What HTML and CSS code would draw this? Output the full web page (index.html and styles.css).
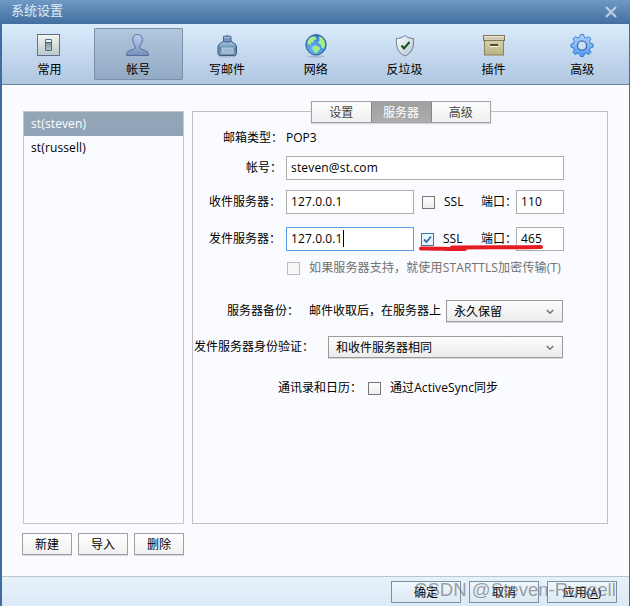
FILE: index.html
```html
<!DOCTYPE html>
<html lang="zh-CN">
<head>
<meta charset="utf-8">
<title>系统设置</title>
<link rel="stylesheet" href="styles.css">
</head>
<body>
<div class="window">
  <header class="titlebar">
    <span>系统设置</span>
    <svg class="close" width="12" height="12" viewBox="0 0 12 12"><path d="M1 1L11 11M11 1L1 11" stroke="#b8cde3" stroke-width="2.4"/></svg>
  </header>
  <nav class="toolbar">
    <a class="tool">
      <svg width="26" height="26" viewBox="0 0 26 26">
        <defs><linearGradient id="sw" x1="0" y1="0" x2="0" y2="1"><stop offset="0" stop-color="#f4f5f0"/><stop offset="1" stop-color="#b9c9c9"/></linearGradient><linearGradient id="knob" x1="0" y1="0" x2="0" y2="1"><stop offset="0" stop-color="#71818f"/><stop offset="1" stop-color="#b5c4cc"/></linearGradient></defs>
        <rect x="1.5" y="1.5" width="22" height="21" fill="url(#sw)" stroke="#5b7391"/>
        <rect x="9.5" y="6.5" width="6" height="11" rx=".5" fill="url(#knob)" stroke="#4b6b8b"/>
        <path d="M10 8h5" stroke="#e6ffff" stroke-width="2"/><path d="M10 9.500h5" stroke="#3f5a7b"/>
      </svg><span>常用</span></a>
    <a class="tool tool-active">
      <svg width="26" height="26" viewBox="0 0 26 26">
        <defs><linearGradient id="man" x1="0" y1="0" x2="0" y2="1"><stop offset="0" stop-color="#bfd1f3"/><stop offset="1" stop-color="#768db7"/></linearGradient></defs>
        <path d="M12.500 1.500C9.300 1.500 7.500 3.800 7.700 6.800C7.900 9.500 8.800 11.500 10 12.500V15C9 16.800 2 17.500 1.500 20.500V22.500H23.500V20.500C23 17.500 16 16.800 15 15V12.500C16.200 11.500 17.100 9.500 17.300 6.800C17.500 3.800 15.700 1.500 12.500 1.500Z" fill="url(#man)" stroke="#526d98"/>
      </svg><span>帐号</span></a>
    <a class="tool">
      <svg width="26" height="26" viewBox="0 0 26 26">
        <defs><linearGradient id="ink" x1="0" y1="0" x2="0" y2="1"><stop offset="0" stop-color="#a8d0e5"/><stop offset=".5" stop-color="#6387ac"/><stop offset="1" stop-color="#8396b2"/></linearGradient></defs>
        <ellipse cx="13" cy="23.500" rx="9" ry="1" fill="#8ea6bf" opacity=".6"/>
        <path d="M9.500 8.500C6 10 4 11.500 4 14V20.500Q4 22.500 6 22.500H20.500Q22.500 22.500 22.500 20.500V14C22.500 11.500 20.500 10 17 8.500Z" fill="url(#ink)" stroke="#3f5780"/>
        <rect x="8" y="15" width="11" height="5" fill="#9db8d3" stroke="#b4cee2"/>
        <path d="M9.500 3.500V8.500Q13 10 17 8.500V3.500Q13 2 9.500 3.500Z" fill="#7895bc" stroke="#485e8a"/><path d="M10 4.200Q13 5.200 16.500 4.200" stroke="#acc3df" fill="none"/>
      </svg><span>写邮件</span></a>
    <a class="tool">
      <svg width="26" height="26" viewBox="0 0 26 26">
        <defs><radialGradient id="sea" cx=".4" cy=".7" r=".7"><stop offset="0" stop-color="#6dbcfa"/><stop offset="1" stop-color="#3975c2"/></radialGradient></defs>
        <ellipse cx="13" cy="23.500" rx="9" ry="1.200" fill="#8ea6bf" opacity=".6"/>
        <circle cx="13" cy="11.800" r="10.200" fill="url(#sea)" stroke="#315d9d"/>
        <path d="M4.500 8.500L6.500 5L9.500 3.500L13 4L13.500 6.500L11 7L10.500 9.500L8.500 9L8 11.500L4.500 11.500ZM16 3.500L19 4.500L21.500 8L22.200 12L20.500 16L18.500 14.500L18 12L15 9.500L16.500 7.500ZM9.500 13.500L12.500 12.500L16.500 14L17 16.500L14.500 18.500L13.500 20.500L11 18.500L9.500 16Z" fill="#a6ee8b"/>
      </svg><span>网络</span></a>
    <a class="tool">
      <svg width="26" height="26" viewBox="0 0 26 26">
        <defs><linearGradient id="sh" x1="0" y1="0" x2="1" y2="1"><stop offset="0" stop-color="#fff"/><stop offset="1" stop-color="#b6c3cf"/></linearGradient></defs>
        <path d="M13 2.500C11 4.500 7.500 5.500 4.500 5.500C4 13 5 19.500 13 23C21 19.500 22 13 21.500 5.500C18.500 5.500 15 4.500 13 2.500Z" fill="url(#sh)" stroke="#647c96"/>
        <path d="M9.500 12.500L12 15.500L17.500 9" fill="none" stroke="#13511d" stroke-width="2"/>
      </svg><span>反垃圾</span></a>
    <a class="tool">
      <svg width="26" height="26" viewBox="0 0 26 26">
        <defs><linearGradient id="box" x1="0" y1="0" x2="0" y2="1"><stop offset="0" stop-color="#d5d2af"/><stop offset="1" stop-color="#b8b180"/></linearGradient></defs>
        <rect x="4.500" y="7.500" width="19" height="14.500" fill="url(#box)" stroke="#8b805b"/><rect x="3.500" y="2.500" width="21" height="5" fill="#d3cdb8" stroke="#857752"/><path d="M4 3.500h20" stroke="#eee9d7"/>
        <path d="M10 12h8" stroke="#4b4938" stroke-width="2"/><path d="M10 13.500h8" stroke="#fffbe9"/>
      </svg><span>插件</span></a>
    <a class="tool">
      <svg width="26" height="26" viewBox="0 0 26 26">
        <defs><linearGradient id="gear" x1="0" y1="0" x2="0" y2="1"><stop offset="0" stop-color="#b3d5ff"/><stop offset="1" stop-color="#4e9af0"/></linearGradient></defs>
        <path transform="translate(0 -1)" d="M11.500 2.500h3l.8 2.700 2 .8 2.500-1.300 2.100 2.100-1.300 2.500.8 2 2.700.8v3l-2.700.8-.8 2 1.300 2.500-2.100 2.100-2.500-1.300-2 .8-.8 2.500h-3l-.8-2.500-2-.8-2.500 1.300-2.100-2.100 1.300-2.500-.8-2-2.600-.8v-3l2.600-.8.8-2-1.300-2.500 2.100-2.100L8.700 6l2-.8Z" fill="url(#gear)" stroke="#3978cc" stroke-linejoin="round"/>
        <circle cx="13" cy="12.500" r="4.600" fill="#c9def3" stroke="#426cae" stroke-width="1.300"/>
      </svg><span>高级</span></a>
  </nav>
  <main class="content">
    <aside class="side">
      <ul class="accounts"><li class="current">st(steven)</li><li>st(russell)</li></ul>
      <div class="actions"><button>新建</button><button>导入</button><button>删除</button></div>
    </aside>
    <section class="panel">
      <div class="tabs"><span>设置</span><span class="tab-on">服务器</span><span>高级</span></div>
      <div class="row row-type"><label>邮箱类型：</label><span>POP3</span></div>
      <div class="row row-account"><label>帐号：</label><div class="field field-wide">steven@st.com</div></div>
      <div class="row row-receive"><label>收件服务器：</label><div class="field">127.0.0.1</div><i class="check"></i><span class="ssl">SSL</span><span class="port">端口：</span><div class="field field-port">110</div></div>
      <div class="row row-send"><label>发件服务器：</label><div class="field field-focus">127.0.0.1<i class="caret"></i></div><i class="check check-on"><svg width="11" height="11" viewBox="0 0 11 11"><path d="M2 5.500L4.500 8L9 2.500" fill="none" stroke="#2f6fac" stroke-width="1.800"/></svg></i><span class="ssl">SSL</span><span class="port">端口：</span><div class="field field-port">465</div>
        <svg class="marker" width="126" height="10" viewBox="0 0 126 10"><path d="M3 5.500C15 5 35 6.500 47 6M34 4.500C60 4 90 4.500 123 4" fill="none" stroke="#e51c23" stroke-width="4" stroke-linecap="round"/></svg>
      </div>
      <div class="row row-tls"><i class="check check-off"></i><span>如果服务器支持，就使用STARTTLS加密传输(T)</span></div>
      <div class="row row-backup"><label>服务器备份：</label><span class="when">邮件收取后，在服务器上</span><div class="select"><span>永久保留</span><svg width="8" height="6" viewBox="0 0 8 6"><path d="M.8 1L4 4.200L7.200 1" fill="none" stroke="#777" stroke-width="1.600"/></svg></div></div>
      <div class="row row-auth"><label>发件服务器身份验证：</label><div class="select select-wide"><span>和收件服务器相同</span><svg width="8" height="6" viewBox="0 0 8 6"><path d="M.8 1L4 4.200L7.200 1" fill="none" stroke="#777" stroke-width="1.600"/></svg></div></div>
      <div class="row row-sync"><label>通讯录和日历：</label><i class="check"></i><span>通过ActiveSync同步</span></div>
    </section>
  </main>
  <footer class="footer">
    <button>确定</button><button>取消</button><button>应用(<u>A</u>)</button>
    <div class="watermark">CSDN @Steven-Russell</div>
  </footer>
</div>
</body>
</html>
```
FILE: styles.css
```css
* { box-sizing: border-box; }
body { margin: 0; overflow: hidden; font: 12px/18px "Open Sans", "Noto Sans CJK SC", sans-serif; color: #000; }
.window { width: 630px; height: 606px; display: flex; flex-direction: column; background: #f9fbff; border-left: 2px solid #3e6ca3; border-right: 1px solid #3e6ca3; }
.titlebar { height: 24px; margin: 0 -1px 0 -2px; padding: 0 13px 3px 11px; flex: none; display: flex; align-items: center; justify-content: space-between; background: linear-gradient(#6f99c5, #426f9f); color: #e0ebf6; font-size: 13px; }
.titlebar span { margin-top: -2px; }
.close { margin-top: 2px; }
.toolbar { height: 61px; flex: none; display: flex; padding: 4px 0 0 3px; border-bottom: 1px solid #6e83a0; background: linear-gradient(#daecfb, #b0c7e1); }
.tool { width: 88.8px; height: 52px; display: flex; flex-direction: column; align-items: center; padding-top: 4px; border: 1px solid transparent; border-radius: 1px; white-space: nowrap; }
.tool svg { flex: none; }
.tool span { margin-top: 2px; }
.tool-active { background: linear-gradient(#b0c7dd, #93aac5); border-color: #7890ab; }
.content { height: 491px; flex: none; display: flex; gap: 8px; padding: 26px 21px 0 20px; }
.side { width: 162px; }
.accounts { list-style: none; margin: 0 0 0 1px; padding: 0; width: 161px; height: 413px; border: 1px solid #c6c7ca; letter-spacing: .12px; }
.accounts li { height: 24px; line-height: 24px; padding-left: 7px; }
.accounts .current { background: linear-gradient(#94a7b9, #8fa3b6); color: #fff; }
.actions { display: flex; gap: 6px; margin: 9px 0 0; }
button { font: inherit; color: #000; padding: 2px 0 0; width: 50px; height: 22px; border: 1px solid #a0a0a0; background: linear-gradient(#fff, #f0f0f0); box-shadow: 0 1px 0 #d9dbde; white-space: nowrap; }
.panel { width: 416px; height: 413px; border: 1px solid #bfc1c5; }
.tabs { display: flex; width: 180px; height: 22px; margin: -11px 0 0 118px; border: 1px solid #a0a0a0; background: linear-gradient(#fcfcfc, #f0f0f0); box-shadow: 0 1px 1px #d4d7dc; color: #444; }
.tabs span { flex: 1; text-align: center; line-height: 22px; }
.tabs .tab-on { flex: none; width: 61px; background: linear-gradient(#a0a0a0, #adadad); border: solid #858585; border-width: 0 1px; color: #fff; }
.row { position: relative; display: flex; align-items: center; height: 30px; white-space: nowrap; }
.row > * { flex: none; }
.row-type { padding-left: 30px; }
.row-type label { width: 63px; }
.row-account { padding-left: 53px; }
.row-account label { width: 40px; }
.row-receive { margin-top: 4px; padding-left: 16px; }
.row-receive label, .row-send label { width: 77px; }
.row-send { margin-top: 7px; padding-left: 16px; }
.row-tls { height: 20px; margin-top: 4px; padding-left: 94px; color: #707070; letter-spacing: .15px; }
.row-tls .check { margin-right: 9px; }
.row-backup { margin-top: 18px; padding-left: 34px; }
.row-backup label { width: 82px; }
.when { width: 137px; }
.row-auth { margin-top: 6px; padding-left: 1px; }
.row-auth label { width: 134px; }
.row-sync { margin-top: 11px; padding-left: 85px; }
.row-sync label { width: 90px; }
.row-sync .check { margin-right: 9px; }
.row-sync > span { letter-spacing: .08px; }
.field { width: 128px; height: 24px; display: flex; align-items: center; padding: 0 0 1px 4px; border: 1px solid #adadad; background: #fff; letter-spacing: .1px; }
.field-wide { width: 278px; padding-bottom: 0; letter-spacing: .17px; }
.field-port { width: 48px; }
.field-focus { border-color: #569de5; }
.caret { width: 1px; height: 17px; background: #000; }
.check { width: 13px; height: 13px; border: 1px solid #777; background: linear-gradient(#fff, #ededed); }
.check svg { display: block; }
.check-on { border-color: #3b77ad; background: #e9f4fe; }
.check-off { border-color: #bcbcbc; background: #f7f7f5; }
.field + .check { margin: 0 9px 0 8px; }
.field-focus + .check-on { margin-left: 7px; }
.ssl { width: 37px; }
.row-send .ssl { width: 38px; }
.port { width: 35px; }
.marker { position: absolute; left: 225px; top: 19px; }
.select { width: 117px; height: 22px; display: flex; align-items: center; justify-content: space-between; padding: 1px 8px 0 7px; border: 1px solid #9b9b9b; background: linear-gradient(#fcfcfc, #ececec); box-shadow: 0 1px 0 #d6d8db; }
.select-wide { width: 235px; }
.footer { position: relative; height: 30px; flex: none; display: flex; justify-content: flex-end; gap: 8px; padding: 4px 12px 0 0; border-top: 1px solid #bcc6d1; background: linear-gradient(#e7f1fa, #dceaf6); }
.footer button { width: 70px; border-color: #7f8f9d; background: linear-gradient(#eff6fc, #dbe8f3); box-shadow: none; }
.watermark { position: absolute; left: 412px; top: 1px; font: 18.6px/24px "Liberation Sans", sans-serif; color: rgba(105, 110, 116, .65); white-space: nowrap; }
```
